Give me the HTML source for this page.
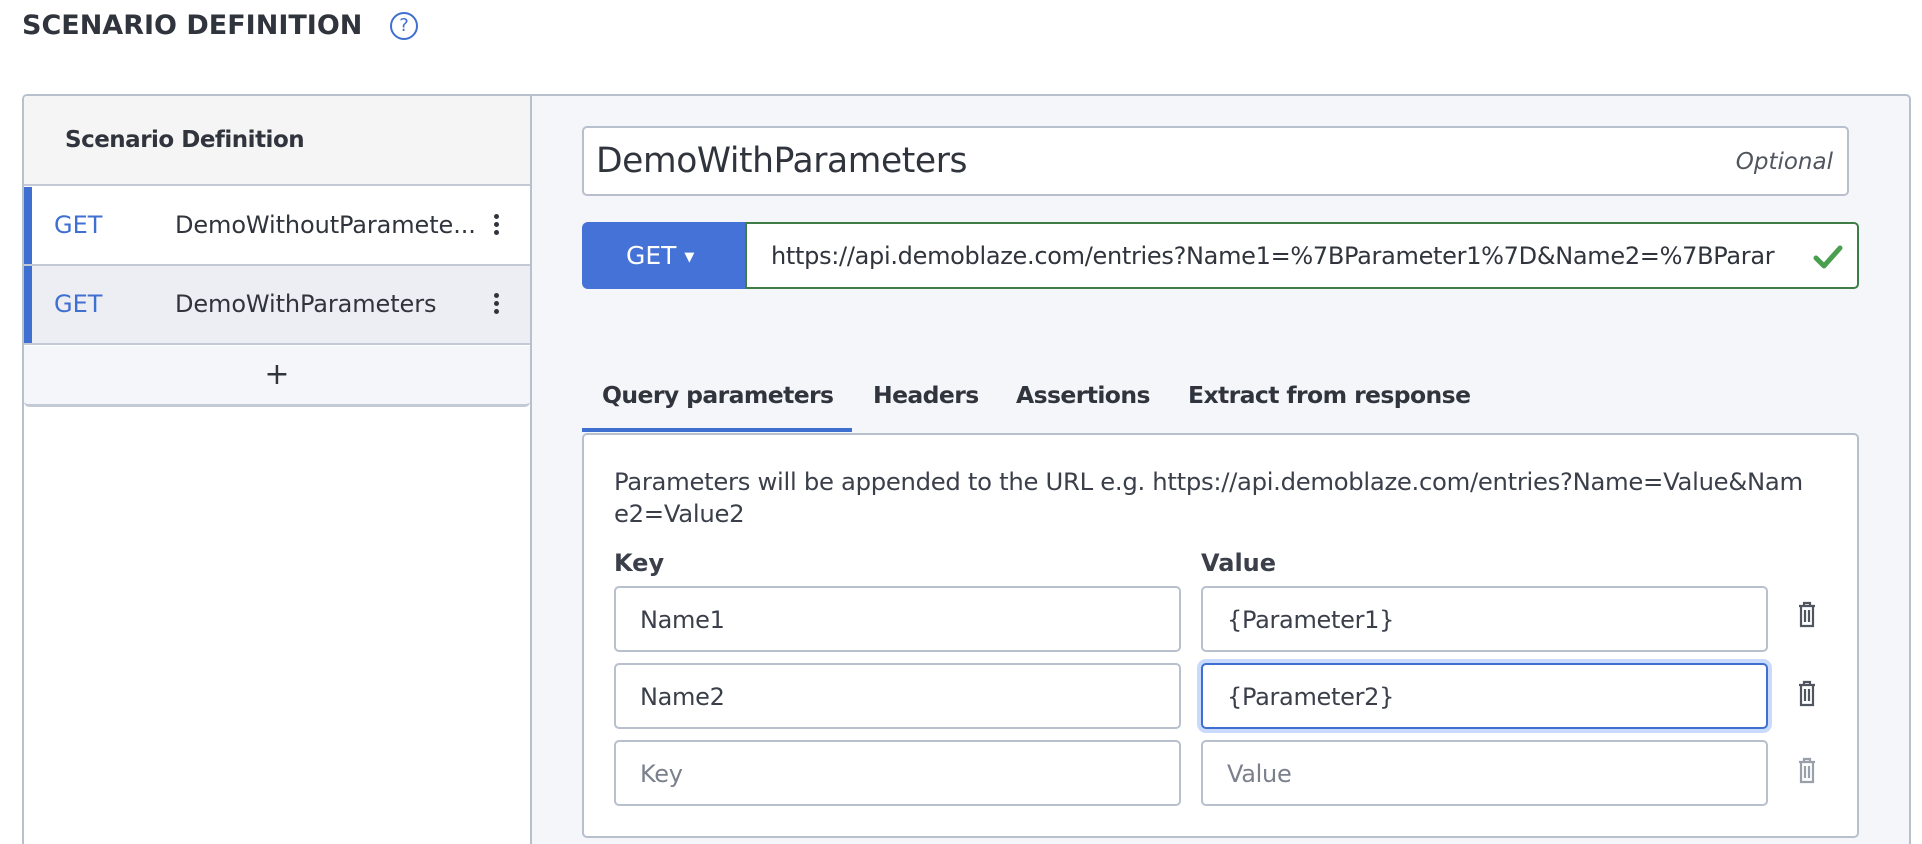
<!DOCTYPE html>
<html><head><meta charset="utf-8"><style>
*{box-sizing:border-box;margin:0;padding:0}
html,body{width:1922px;height:844px;overflow:hidden}
body{background:#fff;font-family:"DejaVu Sans",sans-serif;color:#3a3f4a;position:relative}
.abs{position:absolute}
.title{left:22px;top:10px;font-size:27px;font-weight:bold;color:#30343c;letter-spacing:0px}
.help{left:390px;top:12px;width:28px;height:28px;border:2px solid #3f6fd1;border-radius:50%;color:#3f6fd1;font-size:18px;text-align:center;line-height:24px}
.outer{left:22px;top:94px;width:1889px;height:750px;border:2px solid #b8c0ce;border-bottom:none;border-radius:5px 5px 0 0;background:#f5f6fa;overflow:hidden}
.left{left:0;top:0;width:508px;height:760px;background:#fff;border-right:2px solid #b8c0ce}
.lh{left:0;top:0;width:506px;height:90px;background:#f5f5f5;border-bottom:2px solid #c4cad5}
.lh span{position:absolute;left:41px;top:31px;font-size:23px;font-weight:bold;color:#30343c;letter-spacing:-0.5px}
.row{left:0;width:506px;height:79px;border-bottom:2px solid #c4cad5}
.row .bar{position:absolute;left:0;top:0;width:8px;height:100%;background:#3f6fd1}
.row .m{position:absolute;left:30px;top:24px;font-size:24px;color:#3f6fd1}
.row .n{position:absolute;left:151px;top:24px;font-size:24px;color:#30343c;letter-spacing:-0.1px}
.dots{position:absolute;left:470px;top:27px;width:6px}
.dots i{display:block;width:5px;height:5px;border-radius:50%;background:#30343c;margin-bottom:3px}
.plus{left:0;top:250px;width:506px;height:61px;background:#f5f6fa;border-bottom:3px solid #c4cad5;border-radius:0 0 5px 5px;text-align:center;font-size:30px;line-height:58px;color:#30343c}
.inp{background:#fff;border:2px solid #b8c0ce;border-radius:5px}
.tab{top:381px;font-size:23.5px;font-weight:bold;color:#30343c;letter-spacing:-0.6px}
.it{position:absolute;left:24px;top:18px;font-size:24px;letter-spacing:-0.3px}
</style></head><body>
<div class="abs title">SCENARIO DEFINITION</div>
<div class="abs help">?</div>
<div class="abs outer">
 <div class="abs left">
  <div class="abs lh"><span>Scenario Definition</span></div>
  <div class="abs row" style="top:91px;background:#fff"><div class="bar"></div><span class="m">GET</span><span class="n">DemoWithoutParamete...</span><div class="dots"><i></i><i></i><i></i></div></div>
  <div class="abs row" style="top:170px;background:#eceef3"><div class="bar"></div><span class="m">GET</span><span class="n">DemoWithParameters</span><div class="dots"><i></i><i></i><i></i></div></div>
  <div class="abs plus">+</div>
 </div>
</div>
<div class="abs inp" style="left:582px;top:126px;width:1267px;height:70px"><span class="abs" style="left:12px;top:13px;font-size:34.5px;color:#30343c;letter-spacing:-0.4px">DemoWithParameters</span><span class="abs" style="right:14px;top:21px;font-size:23px;font-style:italic;color:#50555f">Optional</span></div>
<div class="abs" style="left:582px;top:222px;width:164px;height:67px;background:#4472d6;border-radius:6px 0 0 6px;color:#fff;font-size:25px;line-height:67px;padding-left:44px">GET <span style="font-size:13px;vertical-align:3px">▼</span></div>
<div class="abs" style="left:745px;top:222px;width:1114px;height:67px;background:#fff;border:2px solid #3e7d45;border-radius:0 5px 5px 0;overflow:hidden">
 <span class="abs" style="left:24px;top:18px;font-size:24px;color:#30343c;white-space:nowrap;width:1025px;overflow:hidden;letter-spacing:-0.3px">https://api.demoblaze.com/entries?Name1=%7BParameter1%7D&amp;Name2=%7BParar</span>
 <svg class="abs" style="left:1066px;top:21px" width="30" height="24" viewBox="0 0 30 24"><path d="M3 13 L11 21 L27 3" fill="none" stroke="#4a9e4f" stroke-width="5" stroke-linecap="round" stroke-linejoin="round"/></svg>
</div>
<div class="abs tab" style="left:602px">Query parameters</div>
<div class="abs tab" style="left:873px">Headers</div>
<div class="abs tab" style="left:1016px">Assertions</div>
<div class="abs tab" style="left:1188px">Extract from response</div>
<div class="abs inp" style="left:582px;top:433px;width:1277px;height:405px"></div>
<div class="abs" style="left:582px;top:428px;width:270px;height:4px;background:#3f6fd1"></div>
<div class="abs" style="left:614px;top:466px;font-size:24.3px;line-height:32px;color:#3a3f4a;letter-spacing:-0.3px;white-space:nowrap">Parameters will be appended to the URL e.g. https://api.demoblaze.com/entries?Name=Value&amp;Nam<br>e2=Value2</div>
<div class="abs" style="left:614px;top:549px;font-size:24px;font-weight:bold;color:#3a3f4a">Key</div>
<div class="abs" style="left:1201px;top:549px;font-size:24px;font-weight:bold;color:#3a3f4a">Value</div>

<div class="abs inp" style="left:614px;top:586px;width:567px;height:66px"><span class="it">Name1</span></div>
<div class="abs inp" style="left:1201px;top:586px;width:567px;height:66px"><span class="it">{Parameter1}</span></div>
<div class="abs inp" style="left:614px;top:663px;width:567px;height:66px"><span class="it">Name2</span></div>
<div class="abs inp" style="left:1201px;top:663px;width:567px;height:66px;border-color:#3f6fd1;box-shadow:0 0 0 4px #c9dafc"><span class="it">{Parameter2}</span></div>
<div class="abs inp" style="left:614px;top:740px;width:567px;height:66px"><span class="it" style="color:#7a808c">Key</span></div>
<div class="abs inp" style="left:1201px;top:740px;width:567px;height:66px"><span class="it" style="color:#7a808c">Value</span></div>

<svg class="abs" style="left:1797px;top:601px" width="20" height="28" viewBox="0 0 20 28"><path d="M2 5h16M7 5V2h6v3M4 5v20h12V5M8 9v12M12 9v12" fill="none" stroke="#50555f" stroke-width="2.2"/></svg>
<svg class="abs" style="left:1797px;top:680px" width="20" height="28" viewBox="0 0 20 28"><path d="M2 5h16M7 5V2h6v3M4 5v20h12V5M8 9v12M12 9v12" fill="none" stroke="#50555f" stroke-width="2.2"/></svg>
<svg class="abs" style="left:1797px;top:757px" width="20" height="28" viewBox="0 0 20 28"><path d="M2 5h16M7 5V2h6v3M4 5v20h12V5M8 9v12M12 9v12" fill="none" stroke="#9aa0ab" stroke-width="2.2"/></svg>
</body></html>
